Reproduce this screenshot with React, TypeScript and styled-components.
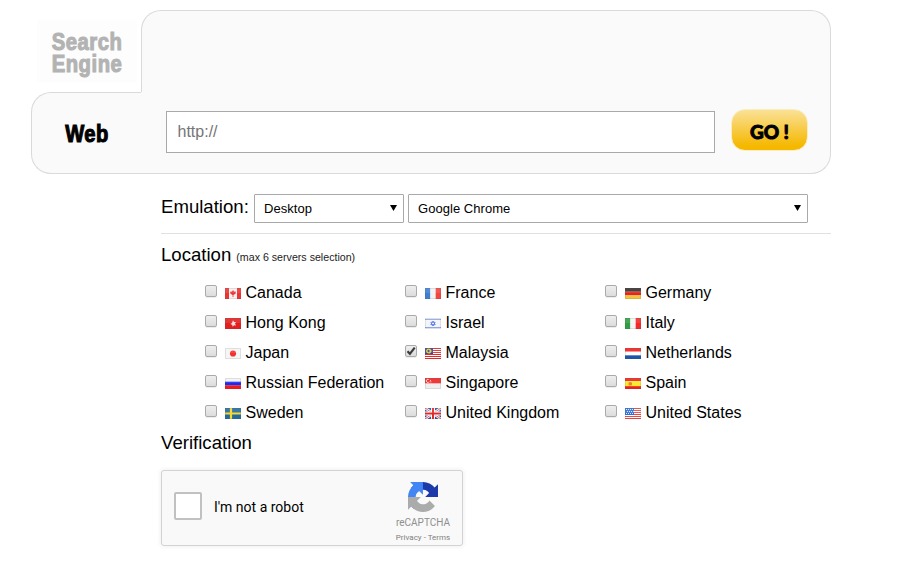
import React, { useState } from 'react';
import styled, { createGlobalStyle } from 'styled-components';

const GlobalStyle = createGlobalStyle`
  * { box-sizing: border-box; }
  body {
    margin: 0;
    background: #fff;
    color: #000;
    font-family: "Liberation Sans", Arial, sans-serif;
  }
`;

const Page = styled.main`
  width: 918px;
  height: 576px;
  padding: 10px 0 0 31px;
  overflow: hidden;
`;

const Header = styled.header`
  display: grid;
  grid-template-columns: 110px 690px;
  grid-template-rows: 82px 82px;
`;

const edge = '1px solid #dadada';

const EngineTab = styled.div`
  margin: 10px 4px 10px 6px;
  padding-top: 11px;
  background: #fdfdfd;
`;

const UpperPanel = styled.div`
  background: #fafafa;
  border: ${edge};
  border-bottom: 0;
  border-radius: 20px 20px 0 0;
`;

const WebTab = styled.div`
  background: #fafafa;
  border: ${edge};
  border-right: 0;
  border-radius: 20px 0 0 20px;
  padding: 30px 0 0 1px;
`;

const LowerPanel = styled.div`
  display: flex;
  background: #fafafa;
  border: ${edge};
  border-top: 0;
  border-left: 0;
  border-radius: 0 0 20px 0;
  padding: 17px 0 0 25px;
`;

const TabLabel = styled.span<{ $color: string; $scale: number }>`
  display: block;
  font: bold 24px/22px "Liberation Sans", Arial, sans-serif;
  text-align: center;
  white-space: nowrap;
  letter-spacing: 0.6px;
  color: ${(p) => p.$color};
  -webkit-text-stroke: 1.1px ${(p) => p.$color};
  transform: scaleX(${(p) => p.$scale});
`;

const UrlInput = styled.input`
  width: 549px;
  height: 42px;
  margin-top: 2px;
  padding: 0 11px 1px 10.5px;
  border: 1px solid #a9a9a9;
  border-radius: 0;
  background: #fff;
  font: 16px "Liberation Sans", Arial, sans-serif;
  outline: 0;
  &::placeholder { color: #757575; }
`;

const GoButton = styled.button`
  width: 77px;
  height: 42px;
  margin-left: 16px;
  padding: 2px 0 0;
  border: 1px solid #fbedc2;
  border-radius: 14px;
  background: linear-gradient(#fae197, #f5b800 90%);
  color: #000;
  font: 900 19px "Lato", sans-serif;
  -webkit-text-stroke: 0.9px #000;
`;

const Content = styled.section`
  width: 670px;
  margin-left: 130px;
`;

const EmulationRow = styled.div`
  display: flex;
  height: 60px;
  padding-top: 20px;
  border-bottom: 1px solid #e0e0e0;
`;

const Title = styled.h2<{ $width?: number }>`
  margin: 0;
  width: ${(p) => (p.$width ? `${p.$width}px` : 'auto')};
  font-size: 18.6px;
  line-height: 26px;
  font-weight: normal;
  white-space: nowrap;
`;

const SelectBox = styled.div<{ $width: number }>`
  display: flex;
  justify-content: space-between;
  align-items: center;
  width: ${(p) => p.$width}px;
  height: 29px;
  margin-right: 4px;
  padding: 0 6px 0 9px;
  border: 1px solid #a9a9a9;
  border-radius: 1px;
  font-size: 13px;
  letter-spacing: 0.04px;
`;

const Arrow = styled.i`
  width: 7px;
  height: 6px;
  margin-top: -1px;
  background: #000;
  clip-path: polygon(0 0, 100% 0, 50% 100%);
`;

const LocationHead = styled.div`
  display: flex;
  align-items: baseline;
  gap: 5px;
  height: 43px;
  padding-top: 8px;
`;

const Hint = styled.small`
  font-size: 10.65px;
  color: #222;
`;

const Locations = styled.div`
  display: grid;
  grid-template-columns: repeat(3, 200px);
  grid-auto-rows: 30px;
  margin-left: 44px;
`;

const LocationItem = styled.label`
  display: flex;
  height: 30px;
  font-size: 16px;
  line-height: 32px;
  white-space: nowrap;
  svg { display: block; margin: 11px 4.5px 0 8px; }
`;

const Box = styled.button`
  display: block;
  width: 12px;
  height: 12px;
  margin-top: 8px;
  padding: 0;
  border: 1px solid #aaa;
  border-radius: 2px;
  background: linear-gradient(#eee, #dcdcdc);
  box-shadow: 0 1px 0 #eee;
  && svg { margin: 0; }
`;

const Verification = styled.div`
  padding-top: 3px;
`;

const Captcha = styled.div`
  display: flex;
  width: 302px;
  height: 76px;
  margin-top: 14px;
  border: 1px solid #d3d3d3;
  border-radius: 3px;
  background: #f9f9f9;
  box-shadow: 0 0 4px 1px rgba(0, 0, 0, 0.06);
  font-family: Roboto, sans-serif;
`;

const RobotBox = styled.div`
  width: 28px;
  height: 28px;
  margin: 21px 12px 0;
  border: 2px solid #c1c1c1;
  border-radius: 2px;
  background: #fff;
`;

const RobotLabel = styled.span`
  flex: 1;
  font-size: 14px;
  line-height: 73px;
`;

const Brand = styled.div`
  display: flex;
  flex-direction: column;
  align-items: center;
  width: 78px;
  padding-top: 11px;
  color: #8f8f8f;
`;

const BrandName = styled.span`
  margin-top: 5px;
  font-size: 10px;
  line-height: 12px;
`;

const Legal = styled.span`
  margin-top: 4px;
  font-size: 8px;
  line-height: 10px;
  color: #808080;
`;

const bands = (colors: string[]) =>
  colors.map((c, i) => <rect key={i} y={(i * 11) / colors.length} width="16" height={11 / colors.length + 0.1} fill={c} />);
const bars = (colors: string[]) =>
  colors.map((c, i) => <rect key={i} x={(i * 16) / colors.length} width={16 / colors.length + 0.1} height="11" fill={c} />);

const flags: Record<string, React.ReactNode> = {
  Canada: (
    <>
      <rect width="16" height="11" fill="#f4f1f1" />
      <path d="M0 0h4v11H0zM12 0h4v11h-4z" fill="#e33" />
      <path d="M8 2l1 1.400 2 .4-.5 2L8.400 7v2h-.8V7L5.500 5.800 5 3.800l2-.4z" fill="#e33" />
    </>
  ),
  France: bars(['#3f7fd0', '#f2f2f2', '#ef4640']),
  Germany: bands(['#332f2c', '#e3261f', '#f0c53c']),
  'Hong Kong': (
    <>
      <rect width="16" height="11" fill="#e32020" />
      <path d="M8 2.300l1 1.700 2-.1-1 1.700 1 2-2-.4-1.300 1.500-.5-2L5.300 6 7 5z" fill="#fbdede" />
    </>
  ),
  Israel: (
    <>
      <rect width="16" height="11" fill="#f3f5fb" />
      <path d="M0 1.500h16M0 9.500h16" stroke="#8ea7e8" />
      <path d="M8 3l2.200 3.700H5.800zM8 8L5.800 4.300h4.400z" fill="none" stroke="#5577ea" strokeWidth=".9" />
    </>
  ),
  Italy: bars(['#2f9d43', '#f5f5f5', '#f02b28']),
  Japan: (
    <>
      <rect width="16" height="11" fill="#f5f5f5" />
      <circle cx="8" cy="5.500" r="3.100" fill="#f3312d" />
    </>
  ),
  Malaysia: (
    <>
      <rect width="16" height="11" fill="#fff" />
      <path d="M0 .5h16M0 2.500h16M0 4.500h16M0 6.500h16M0 8.500h16M0 10.500h16" stroke="#e52b2b" />
      <rect width="8" height="6" fill="#34479e" />
      <circle cx="3.700" cy="3" r="1.900" fill="none" stroke="#f4cf28" strokeWidth="1.300" />
      <circle cx="5.500" cy="3" r="1.100" fill="#f4cf28" />
    </>
  ),
  Netherlands: bands(['#f01d1d', '#fff', '#1d55a8']),
  'Russian Federation': bands(['#f3f3f3', '#1b2bf0', '#f01b1b']),
  Singapore: (
    <>
      {bands(['#ee2424', '#f1eeee'])}
      <path d="M3.600 1.400A1.600 1.600 0 1 0 3.600 4.300" fill="none" stroke="#fff" strokeWidth=".9" />
      <path d="M5 2h1v1H5zM4.500 3.500h2v.8h-2z" fill="#fbb" />
    </>
  ),
  Spain: (
    <>
      <rect width="16" height="11" fill="#ef2020" />
      <rect y="3" width="16" height="5.200" fill="#fde92b" />
      <rect x="3.500" y="4" width="3.500" height="3.500" rx="1" fill="#e88732" />
    </>
  ),
  Sweden: (
    <>
      <rect width="16" height="11" fill="#236a9e" />
      <path d="M6 0v11M0 5.500h16" stroke="#f7d82c" strokeWidth="2.200" />
    </>
  ),
  'United Kingdom': (
    <>
      <rect width="16" height="11" fill="#31509f" />
      <path d="M0 0l16 11M16 0L0 11" stroke="#fff" strokeWidth="2.600" />
      <path d="M0 0l16 11M16 0L0 11" stroke="#e04545" strokeWidth=".9" />
      <path d="M8 0v11M0 5.500h16" stroke="#fff" strokeWidth="4" />
      <path d="M8 0v11M0 5.500h16" stroke="#e02b2b" strokeWidth="2" />
    </>
  ),
  'United States': (
    <>
      <rect width="16" height="11" fill="#fff" />
      <path d="M0 .5h16M0 2.500h16M0 4.500h16M0 6.500h16M0 8.500h16M0 10.500h16" stroke="#ee4a42" />
      <rect width="9" height="7" fill="#2f6fd8" />
      <path d="M1 1.500h7.500M2 3.500h7M1 5.500h7.500" stroke="#dce8fa" strokeDasharray="1 1" />
    </>
  ),
};

const Flag = ({ name }: { name: string }) => (
  <svg width="16" height="11" viewBox="0 0 16 11" overflow="hidden">
    {flags[name]}
    <rect width="16" height="5" fill="#fff" opacity=".1" />
    <rect x=".5" y=".5" width="15" height="10" fill="none" stroke="#555" opacity=".14" />
  </svg>
);

const Check = () => (
  <svg width="10" height="10" viewBox="0 0 10 10">
    <path d="M1.500 5.200l2.400 2.600L8.700 1.600" fill="none" stroke="#3c3c3c" strokeWidth="2.200" />
  </svg>
);

const RecaptchaLogo = () => (
  <svg width="30" height="30" viewBox="0 0 64 64">
    <path fill="#1c3aa9" d="M64 31.955l-.033-1.370V4.687l-7.160 7.160C50.948 4.674 42.033.093 32.050.093c-10.400 0-19.622 4.960-25.458 12.640l11.736 11.860a15.550 15.550 0 0 1 4.754-5.334c2.050-1.600 4.952-2.906 8.968-2.906.485 0 .860.057 1.135.163 4.976.393 9.288 3.140 11.828 7.124l-8.307 8.307L64 31.953" />
    <path fill="#4285f4" d="M31.862.094l-1.370.033H4.594l7.160 7.160C4.580 13.147 0 22.060 0 32.046c0 10.400 4.960 19.622 12.640 25.458L24.500 45.768a15.550 15.550 0 0 1-5.334-4.754c-1.600-2.050-2.906-4.952-2.906-8.968 0-.485.057-.860.163-1.135.393-4.976 3.140-9.288 7.124-11.828l8.307 8.307L31.860.095" />
    <path fill="#ababab" d="M.001 32.045l.033 1.370v25.898l7.160-7.160c5.860 7.173 14.774 11.754 24.760 11.754 10.400 0 19.622-4.960 25.458-12.640l-11.736-11.860a15.550 15.550 0 0 1-4.754 5.334c-2.050 1.600-4.952 2.906-8.968 2.906-.485 0-.860-.057-1.135-.163-4.976-.393-9.288-3.140-11.828-7.124l8.307-8.307c-10.522.040-22.400.066-27.295-.005" />
  </svg>
);

const countries = [
  'Canada', 'France', 'Germany',
  'Hong Kong', 'Israel', 'Italy',
  'Japan', 'Malaysia', 'Netherlands',
  'Russian Federation', 'Singapore', 'Spain',
  'Sweden', 'United Kingdom', 'United States',
];

export default function App() {
  const [selected, setSelected] = useState<string[]>(['Malaysia']);
  const toggle = (name: string) =>
    setSelected((list) =>
      list.includes(name) ? list.filter((n) => n !== name) : list.length < 6 ? [...list, name] : list,
    );

  return (
    <>
      <GlobalStyle />
      <Page>
        <Header>
          <EngineTab>
            <TabLabel $color="#b3b3b3" $scale={0.845}>Search<br />Engine</TabLabel>
          </EngineTab>
          <UpperPanel />
          <WebTab>
            <TabLabel $color="#000" $scale={0.84}>Web</TabLabel>
          </WebTab>
          <LowerPanel>
            <UrlInput placeholder="http://" />
            <GoButton>GO !</GoButton>
          </LowerPanel>
        </Header>
        <Content>
          <EmulationRow>
            <Title $width={93}>Emulation:</Title>
            <SelectBox $width={150}>Desktop<Arrow /></SelectBox>
            <SelectBox $width={400}>Google Chrome<Arrow /></SelectBox>
          </EmulationRow>
          <LocationHead>
            <Title>Location</Title>
            <Hint>(max 6 servers selection)</Hint>
          </LocationHead>
          <Locations>
            {countries.map((name) => (
              <LocationItem key={name}>
                <Box aria-label={name} onClick={() => toggle(name)}>
                  {selected.includes(name) && <Check />}
                </Box>
                <Flag name={name} />
                {name}
              </LocationItem>
            ))}
          </Locations>
          <Verification>
            <Title>Verification</Title>
            <Captcha>
              <RobotBox />
              <RobotLabel>I'm not a robot</RobotLabel>
              <Brand>
                <RecaptchaLogo />
                <BrandName>reCAPTCHA</BrandName>
                <Legal>Privacy - Terms</Legal>
              </Brand>
            </Captcha>
          </Verification>
        </Content>
      </Page>
    </>
  );
}
